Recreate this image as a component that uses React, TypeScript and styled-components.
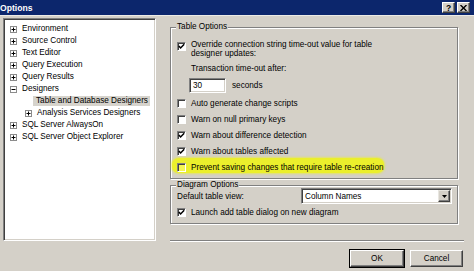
import React from 'react';
import styled, { createGlobalStyle } from 'styled-components';

const GlobalStyle = createGlobalStyle`
  html, body { margin: 0; padding: 0; }
  body {
    width: 474px; height: 271px; overflow: hidden;
    background: #d4d0c8;
    font-family: "Liberation Sans", Arial, sans-serif;
    font-size: 8.2px; color: #000;
  }
  * { box-sizing: border-box; }
`;

const Window = styled.div`
  width: 474px; height: 271px;
  display: flex; flex-direction: column;
  background: #d4d0c8;
`;

const TitleBar = styled.div`
  height: 16px; flex: none;
  background: #0c266c;
  border-bottom: 1px solid #ecebe6;
  display: flex; align-items: center; justify-content: space-between;
  padding-right: 4px;
`;

const Title = styled.span`
  color: #fff; font-weight: bold; font-size: 8.6px;
  margin-left: 0; line-height: 14px;
`;

const CaptionButtons = styled.div`
  display: flex; gap: 2px;
`;

const CaptionButton = styled.div`
  width: 13px; height: 11px;
  background: #d4d0c8;
  border: 1px solid; border-color: #fff #404040 #404040 #fff;
  box-shadow: inset -1px -1px 0 #808080;
  display: flex; align-items: center; justify-content: center;
  font-weight: bold; font-size: 8.5px; line-height: 8px; color: #000;
`;

const Body = styled.div`
  flex: 1; display: flex; gap: 14px;
  padding: 2px 0 0 3px;
`;

const Tree = styled.div`
  width: 153px; height: 223px; flex: none;
  background: #fff;
  border: 1px solid; border-color: #808080 #fff #fff #808080;
  box-shadow: inset 1px 1px 0 #404040, inset -1px -1px 0 #d4d0c8;
  padding: 4px 0 0 1px;
  display: flex; flex-direction: column;
`;

const TreeRow = styled.div<{ $indent: number }>`
  height: 12px; display: flex; align-items: center;
  padding-left: ${p => p.$indent}px;
  white-space: nowrap;
`;

const ExpanderSvg = styled.svg`
  flex: none; margin-right: 3px; display: block;
`;

const TreeLabel = styled.span<{ $selected?: boolean }>`
  padding: 0 ${p => (p.$selected ? '2px 0 3px' : '2px')};
  line-height: 10px;
  background: ${p => (p.$selected ? '#d6d3cc' : 'transparent')};
`;

const RightPane = styled.div`
  width: 294px; display: flex; flex-direction: column;
`;

const GroupBox = styled.div<{ $mt: number; $pt: number; $pb: number }>`
  position: relative;
  margin: ${p => p.$mt}px 6px 0 0;
  padding: ${p => p.$pt}px 5px ${p => p.$pb}px 6px;
  border: 1px solid #808080;
  box-shadow: inset 1px 1px 0 #fff, 1px 1px 0 #fff;
  display: flex; flex-direction: column;
`;

const GroupLabel = styled.span`
  position: absolute; top: -6px; left: 5px;
  padding: 0 1px; line-height: 10px;
  background: #d4d0c8;
`;

const CheckRow = styled.div<{ $h?: number }>`
  position: relative;
  height: ${p => p.$h ?? 16}px;
  display: flex; align-items: center; gap: 5px;
  white-space: nowrap;
`;

const TopCheckRow = styled.div`
  display: flex; align-items: flex-start; gap: 5px;
`;

const RowText = styled.span`
  position: relative; z-index: 1; line-height: 9px;
`;

const Box = styled.span<{ $clear?: boolean; $mt?: number }>`
  position: relative; z-index: 1;
  width: 9px; height: 9px; flex: none;
  margin-top: ${p => p.$mt ?? 0}px;
  border: 1px solid; border-color: #808080 #fff #fff #808080;
  box-shadow: inset 1px 1px 0 #404040;
  background: ${p => (p.$clear ? 'rgba(255,255,120,0.5)' : '#fff')};
  display: flex; align-items: center; justify-content: center;
`;

const Highlight = styled.span`
  position: absolute; left: -5px; top: -1px;
  width: 212px; height: 15px;
  border-radius: 7px / 6px;
  background: #ebef2c;
  box-shadow: 0 0 2px 1px rgba(235, 239, 44, 0.6);
  z-index: 0;
`;

const Indented = styled.div<{ $mt: number }>`
  padding-left: 14px; margin-top: ${p => p.$mt}px;
  display: flex; align-items: center; gap: 6px;
  line-height: 9px;
`;

const NumberInput = styled.div`
  width: 37px; height: 15px; margin-left: -2px;
  background: #fff;
  border: 1px solid; border-color: #808080 #fff #fff #808080;
  box-shadow: inset 1px 1px 0 #404040, inset -1px -1px 0 #d4d0c8;
  padding-left: 3px;
  display: flex; align-items: center;
`;

const CheckList = styled.div`
  margin-top: 2px; display: flex; flex-direction: column;
`;

const FieldRow = styled.div`
  height: 16px; margin-top: 1px;
  display: flex; align-items: center; justify-content: space-between;
`;

const Select = styled.div`
  width: 151px; height: 16px;
  background: #fff;
  border: 1px solid; border-color: #808080 #fff #fff #808080;
  box-shadow: inset 1px 1px 0 #404040, inset -1px -1px 0 #d4d0c8;
  padding: 1px 1px 1px 3px;
  display: flex; align-items: center; justify-content: space-between;
`;

const DropButton = styled.div`
  width: 12px; height: 12px;
  background: #d4d0c8;
  border: 1px solid; border-color: #e8e6e0 #404040 #404040 #e8e6e0;
  box-shadow: inset -1px -1px 0 #808080;
  display: flex; align-items: center; justify-content: center;
`;

const Separator = styled.div`
  margin-top: 16px; height: 2px;
  border-top: 1px solid #808080; border-bottom: 1px solid #fff;
`;

const ButtonRow = styled.div`
  margin-top: 7px; display: flex; justify-content: flex-end; gap: 4px;
`;

const DialogButton = styled.div<{ $default?: boolean; $w: number }>`
  width: ${p => p.$w}px; height: 19px;
  background: #d4d0c8;
  border: 1px solid ${p => (p.$default ? '#000' : 'transparent')};
  display: flex;
  & > span {
    flex: 1;
    display: flex; align-items: center; justify-content: center;
    border: 1px solid; border-color: #fff #404040 #404040 #fff;
    box-shadow: inset -1px -1px 0 #808080;
  }
`;

const Expander = ({ open }: { open?: boolean }) => (
  <ExpanderSvg width="7" height="7" viewBox="0 0 7 7">
    <rect x="0.5" y="0.5" width="6" height="6" fill="#fff" stroke="#8c8c8c" />
    <line x1="1.5" y1="3.5" x2="5.5" y2="3.5" stroke="#000" />
    {!open && <line x1="3.5" y1="1.5" x2="3.5" y2="5.5" stroke="#000" />}
  </ExpanderSvg>
);

const Check = () => (
  <svg width="7" height="7" viewBox="0 0 7 7">
    <polyline points="0.8,3 2.6,4.9 6.2,1.2" fill="none" stroke="#000" strokeWidth="1.5" />
  </svg>
);

type TreeItem = { label: string; indent: number; exp?: 'open' | 'closed'; selected?: boolean };

const treeItems: TreeItem[] = [
  { label: 'Environment', indent: 5, exp: 'closed' },
  { label: 'Source Control', indent: 5, exp: 'closed' },
  { label: 'Text Editor', indent: 5, exp: 'closed' },
  { label: 'Query Execution', indent: 5, exp: 'closed' },
  { label: 'Query Results', indent: 5, exp: 'closed' },
  { label: 'Designers', indent: 5, exp: 'open' },
  { label: 'Table and Database Designers', indent: 28, selected: true },
  { label: 'Analysis Services Designers', indent: 20, exp: 'closed' },
  { label: 'SQL Server AlwaysOn', indent: 5, exp: 'closed' },
  { label: 'SQL Server Object Explorer', indent: 5, exp: 'closed' },
];

const options = [
  { label: 'Auto generate change scripts', checked: false },
  { label: 'Warn on null primary keys', checked: false },
  { label: 'Warn about difference detection', checked: true },
  { label: 'Warn about tables affected', checked: true },
  { label: 'Prevent saving changes that require table re-creation', checked: false, highlight: true },
];

export default function App() {
  return (
    <Window>
      <GlobalStyle />
      <TitleBar>
        <Title>Options</Title>
        <CaptionButtons>
          <CaptionButton>?</CaptionButton>
          <CaptionButton>
            <svg width="7" height="6" viewBox="0 0 7 6">
              <path d="M0.5 0 L6.5 6 M6.5 0 L0.5 6" stroke="#000" strokeWidth="1.4" />
            </svg>
          </CaptionButton>
        </CaptionButtons>
      </TitleBar>
      <Body>
        <Tree>
          {treeItems.map(it => (
            <TreeRow key={it.label} $indent={it.indent}>
              {it.exp && <Expander open={it.exp === 'open'} />}
              <TreeLabel $selected={it.selected}>{it.label}</TreeLabel>
            </TreeRow>
          ))}
        </Tree>
        <RightPane>
          <GroupBox $mt={9} $pt={12} $pb={3}>
            <GroupLabel>Table Options</GroupLabel>
            <TopCheckRow>
              <Box $mt={2}><Check /></Box>
              <RowText>
                Override connection string time-out value for table
                <br />
                designer updates:
              </RowText>
            </TopCheckRow>
            <Indented $mt={6}>Transaction time-out after:</Indented>
            <Indented $mt={5}>
              <NumberInput>30</NumberInput>
              <span>seconds</span>
            </Indented>
            <CheckList>
              {options.map(o => (
                <CheckRow key={o.label}>
                  {o.highlight && <Highlight />}
                  <Box $clear={o.highlight}>{o.checked && <Check />}</Box>
                  <RowText>{o.label}</RowText>
                </CheckRow>
              ))}
            </CheckList>
          </GroupBox>
          <GroupBox $mt={6} $pt={1} $pb={3}>
            <GroupLabel>Diagram Options</GroupLabel>
            <FieldRow>
              <RowText>Default table view:</RowText>
              <Select>
                <span>Column Names</span>
                <DropButton>
                  <svg width="5" height="3" viewBox="0 0 5 3">
                    <path d="M0 0 H5 L2.5 3 Z" fill="#000" />
                  </svg>
                </DropButton>
              </Select>
            </FieldRow>
            <CheckRow>
              <Box><Check /></Box>
              <RowText>Launch add table dialog on new diagram</RowText>
            </CheckRow>
          </GroupBox>
          <Separator />
          <ButtonRow>
            <DialogButton $default $w={56}><span>OK</span></DialogButton>
            <DialogButton $w={55}><span>Cancel</span></DialogButton>
          </ButtonRow>
        </RightPane>
      </Body>
    </Window>
  );
}
